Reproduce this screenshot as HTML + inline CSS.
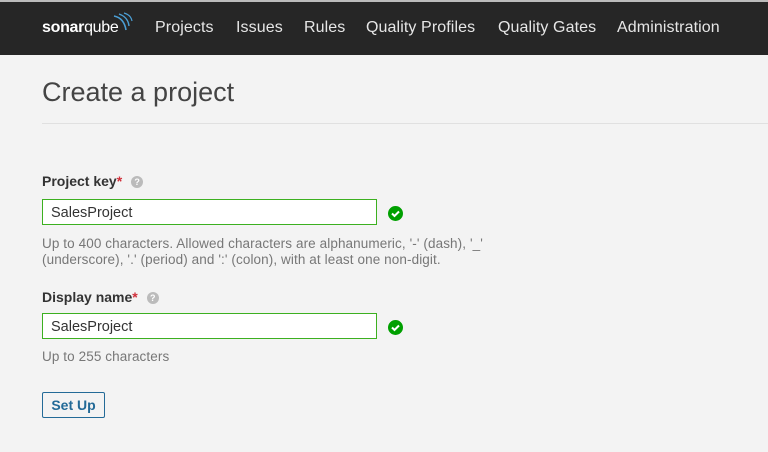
<!DOCTYPE html>
<html><head><style>
*{margin:0;padding:0;box-sizing:border-box}
body{width:768px;height:452px;overflow:hidden;background:#f3f3f3;font-family:"Liberation Sans",sans-serif;position:relative}
.nav{position:absolute;top:0;left:0;width:768px;height:55px;background:#262626;border-top:2px solid #bbb}
.nav span{position:absolute;top:17px;color:#e6e6e6;font-size:16px;letter-spacing:0.1px}
.logo{position:absolute;left:42px;top:17px;color:#fff;font-size:16px;letter-spacing:-0.3px}
.abs{position:absolute}
h1{position:absolute;left:42px;top:77px;font-weight:normal;font-size:27px;color:#444}
.sep{position:absolute;left:42px;top:123px;width:726px;height:1px;background:#e0e0e0}
.lbl{position:absolute;left:42px;font-size:14px;font-weight:bold;color:#333}
.lbl i{color:#d02f3a;font-style:normal}
.q{display:inline-block;width:12px;height:12px;border-radius:50%;background:#bbb;color:#fff;font-size:9px;text-align:center;line-height:12px;margin-left:9px;vertical-align:1px}
.inp{position:absolute;left:42px;width:335px;height:26px;border:1px solid #3cb020;background:#fff;font-size:14.5px;color:#333;padding:5px 8px}
.ok{position:absolute;left:388px;width:15px;height:15px;border-radius:50%;background:#00a000}
.help{position:absolute;left:42px;font-size:13.5px;color:#777;line-height:16px;letter-spacing:0.1px}
.btn{position:absolute;left:42px;top:392px;width:63px;height:26px;border:1px solid #236a97;border-radius:2px;color:#236a97;font-weight:bold;font-size:14px;text-align:center;line-height:24px;background:#f3f3f3}
</style></head><body>
<div class="nav">
<div class="logo"><b>sonar</b>qube</div>
<svg class="abs" style="left:112px;top:10px" width="22" height="22"><path d="M2 4 Q12 6 14 18" stroke="#4b9fd5" stroke-width="1.6" fill="none"/><path d="M7 2 Q16 5 17 14" stroke="#4b9fd5" stroke-width="1.4" fill="none"/><path d="M12 1 Q19 3 20 9" stroke="#4b9fd5" stroke-width="1.2" fill="none"/></svg>
<span style="left:155px">Projects</span>
<span style="left:236px">Issues</span>
<span style="left:304px">Rules</span>
<span style="left:366px">Quality Profiles</span>
<span style="left:498px">Quality Gates</span>
<span style="left:617px">Administration</span>
</div>
<h1>Create a project</h1>
<div class="sep"></div>
<div class="lbl" style="top:173px">Project key<i>*</i><span class="q">?</span></div>
<div class="inp" style="top:199px">SalesProject</div>
<svg class="ok" style="top:206px" viewBox="0 0 15 15"><path d="M4 7.5l2.5 2.5 4.5-4.5" stroke="#fff" stroke-width="2" fill="none"/></svg>
<div class="help" style="top:236px">Up to 400 characters. Allowed characters are alphanumeric, '-' (dash), '_'<br>(underscore), '.' (period) and ':' (colon), with at least one non-digit.</div>
<div class="lbl" style="top:289px">Display name<i>*</i><span class="q">?</span></div>
<div class="inp" style="top:313px">SalesProject</div>
<svg class="ok" style="top:320px" viewBox="0 0 15 15"><path d="M4 7.5l2.5 2.5 4.5-4.5" stroke="#fff" stroke-width="2" fill="none"/></svg>
<div class="help" style="top:349px">Up to 255 characters</div>
<div class="btn">Set Up</div>
</body></html>
